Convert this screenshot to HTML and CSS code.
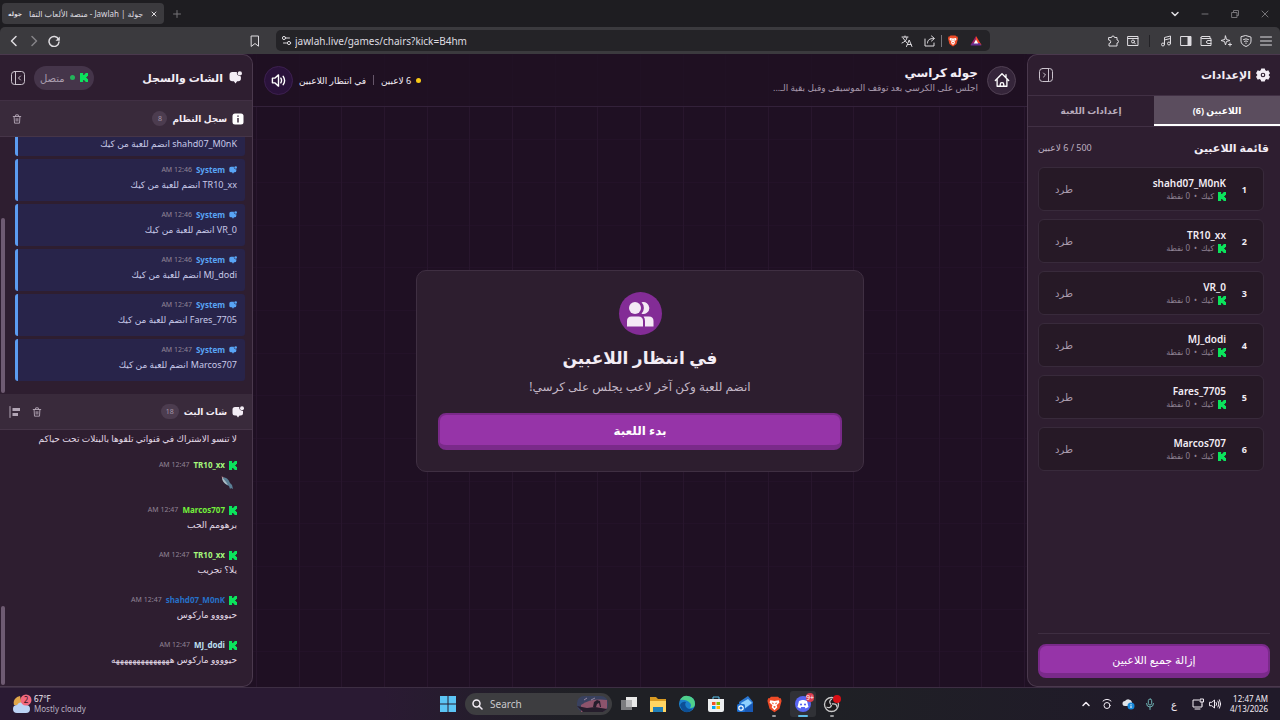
FILE: index.html
```html
<!DOCTYPE html>
<html lang="ar">
<head>
    <meta charset="UTF-8">
    <meta name="viewport" content="width=device-width, initial-scale=1.0">
    <title>جولة | Jawlah - منصة الألعاب التفاعلية</title>
    <link rel="stylesheet" href="styles.css">
</head>
<body>

    <!-- Shared icons -->
    <svg class="sprite" width="0" height="0">
        <symbol id="kick" viewBox="0 0 9 9" preserveAspectRatio="none"><path fill="#0be35c" d="M0 0h3.500v2H5V1h1V0h3v3H8v1H7v1h1v1h1v3H6V8H5V7H3.500v2H0z"/></symbol>
        <symbol id="chat" viewBox="0 0 24 24"><path fill="currentColor" d="M6 2h8.500q-1 7 7.500 8v4q0 5-5 5h-2l-3 4-3-4H6q-5 0-5-5V7q0-5 5-5z"/><circle fill="currentColor" cx="20" cy="4.500" r="4"/></symbol>
        <symbol id="trash" viewBox="0 0 24 24"><path fill="none" stroke="currentColor" stroke-width="2.200" stroke-linecap="round" stroke-linejoin="round" d="M3 6h18M8 6l1-4h6l1 4M5 6l1 16h12l1-16M10 11v6M14 11v6"/></symbol>
        <symbol id="brave" viewBox="0 0 24 24"><path fill="#ee4b27" d="M7 1h10l2 2 2 0 1 4-3 11-7 5-7-5L2 7l1-4h2z"/><path fill="#fff" d="M6 6l6 1 6-1 1 3-4 4 1 3-4 4-4-4 1-3-4-4z"/><path fill="#ee4b27" d="M8 9l3 1-1 2zM16 9l-3 1 1 2zM10 15l2-1 2 1-2 2z"/></symbol>
    </svg>

    <!-- Browser window -->
    <header class="browser" dir="ltr">
        <div class="tab-strip">
            <div class="tab">
                <span class="tab-logo" dir="rtl">جوله</span>
                <span class="tab-title" dir="rtl">جولة | Jawlah - منصة الألعاب التفا</span>
                <button class="icon-button" aria-label="Close tab"><svg width="8" height="8" viewBox="0 0 8 8"><path class="line" d="M2 2l4 4M6 2L2 6"/></svg></button>
            </div>
            <button class="icon-button dim new-tab" aria-label="New tab"><svg width="10" height="10" viewBox="0 0 10 10"><path class="line" d="M5 1.500v7M1.500 5h7"/></svg></button>
            <div class="window-buttons">
                <button class="icon-button" aria-label="Search tabs"><svg width="10" height="10" viewBox="0 0 10 10"><path class="line bold" d="M2 3.500l3 3 3-3"/></svg></button>
                <button class="icon-button dim" aria-label="Minimize"><svg width="10" height="10" viewBox="0 0 10 10"><path class="line" d="M2 5h6"/></svg></button>
                <button class="icon-button dim" aria-label="Restore"><svg width="10" height="10" viewBox="0 0 10 10"><path class="line" d="M2 3.500h5v5H2zM3.500 3.500v-2h5v5H7"/></svg></button>
                <button class="icon-button dim" aria-label="Close"><svg width="10" height="10" viewBox="0 0 10 10"><path class="line" d="M2 2l6 6M8 2L2 8"/></svg></button>
            </div>
        </div>
        <div class="toolbar">
            <div class="nav-buttons">
                <button class="icon-button" aria-label="Back"><svg width="12" height="12" viewBox="0 0 12 12"><path class="line bold" d="M8 1.500L3.500 6 8 10.500"/></svg></button>
                <button class="icon-button dim" aria-label="Forward"><svg width="12" height="12" viewBox="0 0 12 12"><path class="line bold" d="M4 1.500L8.500 6 4 10.500"/></svg></button>
                <button class="icon-button" aria-label="Reload"><svg width="12" height="12" viewBox="0 0 12 12"><path class="line bold" d="M10.500 4.200A5 5 0 1 0 11 7"/><path fill="currentColor" d="M11.800 1.500v4.300H7.500z"/></svg></button>
            </div>
            <button class="icon-button bookmark" aria-label="Bookmark"><svg width="12" height="12" viewBox="0 0 12 12"><path class="line" d="M2.500 1h7v10.200L6 8.500l-3.500 2.700z"/></svg></button>
            <div class="address">
                <svg width="11" height="11" viewBox="0 0 11 11"><path class="line" d="M5 3h3.500M2.500 8h3"/><circle class="line" cx="3" cy="3" r="1.600"/><circle class="line" cx="8" cy="8" r="1.600"/></svg>
                <input type="text" aria-label="Address" value="jawlah.live/games/chairs?kick=B4hm">
                <button class="icon-button" aria-label="Translate"><svg width="12" height="12" viewBox="0 0 12 12"><path class="line" d="M1 2h6M4 1v1M2 3l4 5M6 2.500C6 5 3.500 7 1 8M5.500 11.500l2.700-6.500 2.700 6.500M6.500 9.500H10"/></svg></button>
                <button class="icon-button" aria-label="Share"><svg width="12" height="12" viewBox="0 0 12 12"><path class="line" d="M1 4v7h9V8M3.500 8c0-3 2-4.500 6-4.500M7.500 1l3 2.500-3 2.500"/></svg></button>
                <span class="separator"></span>
                <svg width="12" height="12"><use href="#brave"/></svg>
                <svg width="12" height="12" viewBox="0 0 12 12"><path fill="#ff4724" d="M6 1l5.500 9H9L6 5z"/><path fill="#9e1f63" d="M6 1L.5 10H3l3-5z"/><path fill="#662d91" d="M.5 10.500h11L9.500 8h-7z"/><path fill="#fff" d="M6 4.500L8.300 8.500H3.700z"/></svg>
            </div>
            <div class="extensions">
                <button class="icon-button" aria-label="Extensions"><svg width="12" height="12" viewBox="0 0 12 12"><path class="line" d="M2 2.500h2.500a1.500 1.500 0 0 1 3 0H10V5a1.500 1.500 0 0 1 0 3v3H2V8.500a1.500 1.500 0 0 0 0-3.500z"/></svg></button>
                <button class="icon-button" aria-label="Page search"><svg width="12" height="12" viewBox="0 0 12 12"><path class="line" d="M1 1.500h10v9H1zM1 3.500h10"/><circle class="line" cx="6" cy="6.500" r="1.500"/><path class="line" d="M7 7.500l1.500 1.500"/></svg></button>
                <span class="separator"></span>
                <button class="icon-button" aria-label="Music"><svg width="12" height="12" viewBox="0 0 12 12"><path class="line" d="M4.500 9.500V2.500L10.500 1v7.500M4.500 5l6-1.500"/><circle class="line" cx="3" cy="9.500" r="1.500"/><circle class="line" cx="9" cy="8.500" r="1.500"/></svg></button>
                <button class="icon-button" aria-label="Sidebar"><svg width="12" height="12" viewBox="0 0 12 12"><path class="line" d="M1 1.500h10v9H1z"/><path fill="currentColor" d="M7.500 1.500H11v9H7.500z"/></svg></button>
                <button class="icon-button" aria-label="Wallet"><svg width="12" height="12" viewBox="0 0 12 12"><path class="line" d="M10 3.500V1.500H2a1 1 0 0 0 0 2h9v7H1V2.500M11 5.500H8a1.500 1.500 0 0 0 0 3h3"/></svg></button>
                <button class="icon-button" aria-label="Leo"><svg width="12" height="12" viewBox="0 0 12 12"><path class="line" d="M5.500 1l1 3.500L10 5.500l-3.500 1-1 3.500-1-3.500L1 5.500l3.500-1zM10 8v3M8.500 9.500h3"/></svg></button>
                <button class="icon-button" aria-label="VPN"><svg width="12" height="12" viewBox="0 0 12 12"><path class="line" d="M6 .6l5 1.500v4c0 2.500-2 4.200-5 5.400C3 10.300 1 8.600 1 6.100v-4zM3.500 4.500q2.500-1.500 5 0M4.500 6.300q1.500-1 3 0M6 8v.5"/></svg></button>
                <button class="icon-button" aria-label="Menu"><svg width="12" height="12" viewBox="0 0 12 12"><path class="line" d="M.5 2h11M.5 6h11M.5 10h11"/></svg></button>
            </div>
        </div>
    </header>

    <div class="app" dir="rtl">

        <!-- Settings and players -->
        <aside class="panel settings">
            <div class="panel-header">
                <svg width="14" height="14" viewBox="0 0 24 24"><path fill="currentColor" fill-rule="evenodd" d="M9 1h6l1 3 2 1 3-1 3 5-2 2v2l2 2-3 5-3-1-2 1-1 3H9l-1-3-2-1-3 1-3-5 2-2v-2L0 9l3-5 3 1 2-1zM12 8a4 4 0 1 0 0 8 4 4 0 0 0 0-8zM12 10a2 2 0 1 1 0 4 2 2 0 0 1 0-4z"/></svg>
                <h2>الإعدادات</h2>
                <button class="icon-button collapse" aria-label="إخفاء الإعدادات"><svg width="16" height="16" viewBox="0 0 16 16"><rect class="line" x="1.500" y="1.500" width="13" height="13" rx="3"/><path class="line" d="M10.500 1.500v13M5.500 6l2 2-2 2"/></svg></button>
            </div>
            <div class="tabs">
                <button class="tab-button active">اللاعبين (6)</button>
                <button class="tab-button">إعدادات اللعبة</button>
            </div>
            <div class="list-title">
                <h3>قائمة اللاعبين</h3>
                <span>500 / 6 لاعبين</span>
            </div>
            <ol class="players">
                <li class="player">
                    <span class="rank">1</span>
                    <div class="player-info">
                        <span class="player-name">shahd07_M0nK</span>
                        <span class="player-meta"><svg width="8" height="9"><use href="#kick"/></svg><span>كيك</span><span>•</span><span>0 نقطة</span></span>
                    </div>
                    <button class="kick-button">طرد</button>
                </li>
                <li class="player">
                    <span class="rank">2</span>
                    <div class="player-info">
                        <span class="player-name">TR10_xx</span>
                        <span class="player-meta"><svg width="8" height="9"><use href="#kick"/></svg><span>كيك</span><span>•</span><span>0 نقطة</span></span>
                    </div>
                    <button class="kick-button">طرد</button>
                </li>
                <li class="player">
                    <span class="rank">3</span>
                    <div class="player-info">
                        <span class="player-name">VR_0</span>
                        <span class="player-meta"><svg width="8" height="9"><use href="#kick"/></svg><span>كيك</span><span>•</span><span>0 نقطة</span></span>
                    </div>
                    <button class="kick-button">طرد</button>
                </li>
                <li class="player">
                    <span class="rank">4</span>
                    <div class="player-info">
                        <span class="player-name">MJ_dodi</span>
                        <span class="player-meta"><svg width="8" height="9"><use href="#kick"/></svg><span>كيك</span><span>•</span><span>0 نقطة</span></span>
                    </div>
                    <button class="kick-button">طرد</button>
                </li>
                <li class="player">
                    <span class="rank">5</span>
                    <div class="player-info">
                        <span class="player-name">Fares_7705</span>
                        <span class="player-meta"><svg width="8" height="9"><use href="#kick"/></svg><span>كيك</span><span>•</span><span>0 نقطة</span></span>
                    </div>
                    <button class="kick-button">طرد</button>
                </li>
                <li class="player">
                    <span class="rank">6</span>
                    <div class="player-info">
                        <span class="player-name">Marcos707</span>
                        <span class="player-meta"><svg width="8" height="9"><use href="#kick"/></svg><span>كيك</span><span>•</span><span>0 نقطة</span></span>
                    </div>
                    <button class="kick-button">طرد</button>
                </li>
            </ol>
            <div class="panel-footer">
                <button class="primary-button remove-all">إزالة جميع اللاعبين</button>
            </div>
        </aside>

        <!-- Game -->
        <main class="game">
            <div class="game-header">
                <button class="round-button" aria-label="الرئيسية"><svg width="16" height="16" viewBox="0 0 18 18"><path class="line bold" d="M1.500 9.500L9 2l7.500 7.500M3.500 8v8h11V8M13.500 6V3M7 16v-2a2 2 0 0 1 4 0v2"/></svg></button>
                <div class="game-title">
                    <h1>جوله كراسي</h1>
                    <p>اجلس على الكرسي بعد توقف الموسيقى وقبل بقية الـ...</p>
                </div>
                <div class="status">
                    <span class="dot yellow"></span>
                    <span>6 لاعبين</span>
                    <span class="bar"></span>
                    <span>في انتظار اللاعبين</span>
                </div>
                <button class="round-button purple" aria-label="الصوت"><svg width="15" height="15" viewBox="0 0 16 16"><path class="line bold" d="M1.500 5.500h2.500L8 2v12l-4-3.500H1.500zM10.500 5.500q1.500 2.500 0 5M13 3.500q3 4.500 0 9"/></svg></button>
            </div>
            <div class="stage">
                <section class="start-card">
                    <div class="badge-icon"><svg width="30" height="30" viewBox="0 0 30 30"><circle cx="10" cy="9" r="6"/><path d="M16.500 3.300a6 6 0 1 1 0 11.400 8 8 0 0 0 0-11.400zM2 27.500V22q0-4.500 4.500-4.500h7Q18 17.500 18 22v5.500H2zM18.500 17.500H24q4.500 0 4.500 4.500v5.500H20V22q0-3-1.500-4.500z"/></svg></div>
                    <h2>في انتظار اللاعبين</h2>
                    <p>انضم للعبة وكن آخر لاعب يجلس على كرسي!</p>
                    <button class="primary-button">بدء اللعبة</button>
                </section>
            </div>
        </main>

        <!-- Chat and log -->
        <aside class="panel chat">
            <div class="panel-header">
                <svg width="13" height="13"><use href="#chat"/></svg>
                <h2>الشات والسجل</h2>
                <span class="connected"><svg width="8" height="9"><use href="#kick"/></svg><span class="dot"></span>متصل</span>
                <button class="icon-button collapse" aria-label="إخفاء الشات"><svg width="16" height="16" viewBox="0 0 16 16"><rect class="line" x="1.500" y="1.500" width="13" height="13" rx="3"/><path class="line" d="M5.500 1.500v13M10.500 6l-2 2 2 2"/></svg></button>
            </div>
            <div class="section-header">
                <svg width="12" height="12" viewBox="0 0 12 12"><rect fill="#fff" x=".5" y=".5" width="11" height="11" rx="2.500"/><path stroke="#3a2a3d" stroke-width="1.500" d="M6 2.500v1.300M6 5v4.500"/></svg>
                <h3>سجل النظام</h3>
                <span class="count">8</span>
                <button class="icon-button" aria-label="مسح السجل"><svg width="10" height="10"><use href="#trash"/></svg></button>
            </div>
            <div class="feed log">
                <span class="scroll-thumb log-thumb"></span>
                <div class="message system">
                    <p>shahd07_M0nK انضم للعبة من كيك</p>
                </div>
                <div class="message system">
                    <div class="message-head"><svg width="8" height="8"><use href="#chat"/></svg><b>System</b><time>12:46 AM</time></div>
                    <p>TR10_xx انضم للعبة من كيك</p>
                </div>
                <div class="message system">
                    <div class="message-head"><svg width="8" height="8"><use href="#chat"/></svg><b>System</b><time>12:46 AM</time></div>
                    <p>VR_0 انضم للعبة من كيك</p>
                </div>
                <div class="message system">
                    <div class="message-head"><svg width="8" height="8"><use href="#chat"/></svg><b>System</b><time>12:46 AM</time></div>
                    <p>MJ_dodi انضم للعبة من كيك</p>
                </div>
                <div class="message system">
                    <div class="message-head"><svg width="8" height="8"><use href="#chat"/></svg><b>System</b><time>12:47 AM</time></div>
                    <p>Fares_7705 انضم للعبة من كيك</p>
                </div>
                <div class="message system">
                    <div class="message-head"><svg width="8" height="8"><use href="#chat"/></svg><b>System</b><time>12:47 AM</time></div>
                    <p>Marcos707 انضم للعبة من كيك</p>
                </div>
            </div>
            <div class="section-header">
                <svg width="12" height="12"><use href="#chat"/></svg>
                <h3>شات البث</h3>
                <span class="count">18</span>
                <button class="icon-button" aria-label="مسح الشات"><svg width="10" height="10"><use href="#trash"/></svg></button>
                <button class="icon-button align" aria-label="محاذاة"><svg width="12" height="12" viewBox="0 0 12 12"><path class="line" d="M1 .5v11"/><path fill="currentColor" d="M3.500 2H11v3H3.500zM3.500 7H9v3H3.500z"/></svg></button>
            </div>
            <div class="feed stream">
                <span class="scroll-thumb stream-thumb"></span>
                <div class="message">
                    <p>لا تنسو الاشتراك في قنواتي تلقوها بالبنلات تحت حياكم</p>
                </div>
                <div class="message">
                    <div class="message-head"><svg width="8" height="9"><use href="#kick"/></svg><b class="lime">TR10_xx</b><time>12:47 AM</time></div>
                    <svg class="fish" width="16" height="16" viewBox="0 0 16 16"><path fill="#5b7f95" d="M3 2q6 0 8 6l2 2 1 4-2-1-1 1-1-3Q4 9 3 2z"/><path fill="#aebdc4" d="M3 2q0 6 6 8L7 7z"/><path fill="#c98f97" d="M2.500 1.500l2 .5-1 1.500z"/></svg>
                </div>
                <div class="message">
                    <div class="message-head"><svg width="8" height="9"><use href="#kick"/></svg><b class="green">Marcos707</b><time>12:47 AM</time></div>
                    <p>برهومم الحب</p>
                </div>
                <div class="message">
                    <div class="message-head"><svg width="8" height="9"><use href="#kick"/></svg><b class="lime">TR10_xx</b><time>12:47 AM</time></div>
                    <p>يلا؟ تجريب</p>
                </div>
                <div class="message">
                    <div class="message-head"><svg width="8" height="9"><use href="#kick"/></svg><b class="blue">shahd07_M0nK</b><time>12:47 AM</time></div>
                    <p>حيوووو ماركوس</p>
                </div>
                <div class="message">
                    <div class="message-head"><svg width="8" height="9"><use href="#kick"/></svg><b class="ice">MJ_dodi</b><time>12:47 AM</time></div>
                    <p>حيوووو ماركوس ههههههههههههههه</p>
                </div>
            </div>
        </aside>
    </div>

    <!-- Taskbar -->
    <footer class="taskbar" dir="ltr">
        <div class="weather">
            <svg width="20" height="20" viewBox="0 0 20 20"><path fill="#e0a64a" d="M8 2a7 7 0 0 0-6 9h8z"/><path fill="#bcd3f5" d="M5 19a4 4 0 0 1 0-8 5 5 0 0 1 9 0 4 4 0 0 1 0 8z"/><circle fill="#f0687e" cx="14" cy="6" r="5.500"/><text class="weather-badge" x="14" y="9" text-anchor="middle">2</text></svg>
            <div>
                <div>67°F</div>
                <div class="weather-text">Mostly cloudy</div>
            </div>
        </div>
        <div class="task-icons">
            <svg width="18" height="18" viewBox="0 0 18 18"><path fill="#5cc5f5" d="M1 1h7.500v7.500H1zM9.500 1H17v7.500H9.500zM1 9.500h7.500V17H1zM9.500 9.500H17V17H9.500z"/></svg>
            <label class="search">
                <svg width="11" height="11" viewBox="0 0 11 11"><circle class="line bold" cx="4.500" cy="4.500" r="3.500"/><path class="line bold" d="M7 7l3 3"/></svg>
                <input type="text" placeholder="Search" aria-label="Search">
                <svg width="31" height="16" viewBox="0 0 31 16"><rect width="31" height="16" rx="7" fill="#39415f"/><path fill="#8d546c" d="M4 9q10-7 26-5v8l-4 4H4z"/><path fill="#251d2c" d="M0 10l10 2 8-1 12 2-4 3H6zM16 11l1-5 3-2 3 1 1 6h-1l-1-4-2 1-1 3z"/><path stroke="#d6b7cf" stroke-width=".6" d="M7 4l3-2M14 4l4-2"/></svg>
            </label>
            <svg width="18" height="18" viewBox="0 0 18 18"><path fill="#7c7c7f" d="M1 5h11v10H1z"/><path fill="#e9e9e9" d="M6 2h11v10H6z"/><path fill="#b5b5b7" d="M6 5h6v7H6z"/></svg>
            <svg width="18" height="18" viewBox="0 0 18 18"><path fill="#d99a22" d="M1 2h6l2 2h8v5H1z"/><path fill="#ffd563" d="M1 6h16v11H1z"/><path fill="#217fb8" d="M4 12h10v5H4z"/></svg>
            <svg width="18" height="18" viewBox="0 0 18 18"><circle cx="9" cy="9" r="8" fill="#1a7fcb"/><path fill="#4fd08b" d="M2 5a8 8 0 0 1 15 4q0 4-5 4 2-3 0-5-4-4-10-3z"/><path fill="#0d4f96" d="M2 10q2-4 6-3-2 3 1 6 3 2 6 0-3 5-8 4-4-2-5-7z"/></svg>
            <svg width="18" height="18" viewBox="0 0 18 18"><path fill="none" stroke="#5ac2ee" d="M6 5V2h6v3"/><path fill="#eceef0" d="M1 4h16v11q0 2-2 2H3q-2 0-2-2z"/><path fill="#f25022" d="M5 7h3.500v3H5z"/><path fill="#7fba00" d="M9.500 7H13v3H9.500z"/><path fill="#00a4ef" d="M5 11h3.500v3H5z"/><path fill="#ffb900" d="M9.500 11H13v3H9.500z"/></svg>
            <svg width="18" height="18" viewBox="0 0 18 18"><path fill="#2a76d2" d="M3 7l9-6 5 6v10H4z"/><path fill="#8fd0ff" d="M5 8l7-4 4 4-8 6z"/><path fill="#1858b5" d="M17 8v9H5z"/><rect x="1" y="9" width="8" height="8" rx="1.500" fill="#1e6fd0"/><circle cx="5" cy="13" r="2.200" fill="none" stroke="#fff" stroke-width="1.200"/></svg>
            <span class="running"><svg width="17" height="17"><use href="#brave"/></svg></span>
            <span class="running current"><svg width="18" height="18" viewBox="0 0 18 18"><circle cx="9" cy="9" r="8" fill="#5865f2"/><path fill="#fff" d="M5 6l3-1h2l3 1 1.500 6-3 1.500L10.800 12H7.200l-.7 1.500-3-1.500z"/><circle cx="7" cy="9.500" r="1.100" fill="#5865f2"/><circle cx="11" cy="9.500" r="1.100" fill="#5865f2"/></svg><span class="notify">9+</span></span>
            <span class="running"><svg width="18" height="18" viewBox="0 0 18 18"><circle cx="8.500" cy="9.500" r="7" fill="#1c1a1d" stroke="#c9c9c9" stroke-width="1.300"/><path fill="none" stroke="#c9c9c9" stroke-width="1.300" d="M9 4q-4 2-1 5.500M9 9q5-1 5 3.500M8.500 10q-1 4-5 2"/><circle cx="14" cy="4" r="4" fill="#d80f16"/></svg></span>
        </div>
        <div class="tray">
            <svg width="12" height="12" viewBox="0 0 12 12"><path class="line bold" d="M3 7.500l3-3 3 3"/></svg>
            <svg width="12" height="12" viewBox="0 0 12 12"><circle class="line" cx="6" cy="7.500" r="3"/><path class="line" d="M2 3q4-3.500 8 0"/></svg>
            <svg width="13" height="12" viewBox="0 0 13 12"><path fill="#dfe3e8" d="M3 8a2.500 2.500 0 0 1 0-5 4 4 0 0 1 7 1v4z"/><circle cx="9" cy="8" r="3.500" fill="#1687d9"/><path stroke="#fff" d="M9 6v.8M9 7.500V10"/></svg>
            <svg class="mic" width="12" height="12" viewBox="0 0 12 12"><rect class="line" x="4.300" y="1" width="3.400" height="6" rx="1.700"/><path class="line" d="M2.500 5.500a3.500 3.500 0 0 0 7 0M6 9v2.500"/></svg>
            <span class="language" lang="ar">ع</span>
            <div class="tray-group">
                <svg width="12" height="12" viewBox="0 0 12 12"><path class="line" d="M7 2H1v7h9V7M3 11h5M8.500 1h3v3h-3zM10 4v3"/></svg>
                <svg width="12" height="12" viewBox="0 0 12 12"><path class="line" d="M.8 4.300h2L5.500 2v8L2.800 7.700h-2zM7.200 4.500q1 1.500 0 3M9 3q2 3 0 6M10.500 1.800q2.500 4.200 0 8.400"/></svg>
            </div>
            <div class="clock">
                <div>12:47 AM</div>
                <div>4/13/2026</div>
            </div>
        </div>
    </footer>

</body>
</html>
```

FILE: styles.css
```css
* {
    box-sizing: border-box;
}

body {
    margin: 0;
    min-height: 100vh;
    display: flex;
    flex-direction: column;
    background: #1d0f20;
    color: #f3edf5;
    font-family: "Noto Sans", "DejaVu Sans", sans-serif;
    font-size: 10px;
}

h1, h2, h3, p, ol {
    margin: 0;
    padding: 0;
}

button, input {
    font: inherit;
    color: inherit;
}

svg {
    display: block;
    flex: none;
}

.sprite {
    position: absolute;
}

.line {
    fill: none;
    stroke: currentColor;
    stroke-width: 1;
    stroke-linecap: round;
    stroke-linejoin: round;
}

.line.bold {
    stroke-width: 1.5;
}

.icon-button {
    display: flex;
    padding: 0;
    border: none;
    background: none;
    cursor: pointer;
}

.dim {
    opacity: 0.45;
}

/* Browser window */
.browser {
    background: #1e1d21;
    color: #dedce0;
}

.tab-strip {
    display: flex;
    align-items: center;
    height: 27px;
    padding: 0 10px 0 2px;
}

.tab {
    display: flex;
    align-items: center;
    gap: 7px;
    height: 21px;
    padding: 0 6px;
    border-radius: 4px;
    background: #3b3a3e;
}

.tab-logo {
    font-size: 6px;
    font-weight: bold;
}

.tab-title {
    white-space: nowrap;
    font-size: 8px;
    line-height: 16px;
}

.new-tab {
    margin-left: 8px;
}

.window-buttons {
    display: flex;
    gap: 20px;
    margin-left: auto;
}

.toolbar {
    display: flex;
    align-items: center;
    height: 27px;
    padding: 0 8px;
    border-radius: 5px 5px 0 0;
    background: #3b3a3e;
}

.nav-buttons {
    display: flex;
    gap: 8px;
    flex: 0 1 241px;
}

.bookmark {
    margin-right: 15px;
}

.address {
    flex: 0 1 714px;
    display: flex;
    align-items: center;
    gap: 11px;
    height: 21px;
    padding: 0 8px 0 5px;
    border-radius: 5px;
    background: #242327;
}

.address input {
    flex: 1;
    min-width: 0;
    margin-left: -8px;
    padding: 0;
    border: none;
    outline: none;
    background: none;
    font-size: 10px;
}

.address .separator {
    margin: 0 -6px;
    background: #77757a;
}

.extensions {
    display: flex;
    align-items: center;
    gap: 8px;
    margin-left: auto;
}

.separator {
    width: 1px;
    height: 12px;
    margin: 0 2px;
    background: #232226;
}

/* Page */
.app {
    flex: 1;
    display: flex;
    background-color: #1f1023;
    background-image:
        linear-gradient(90deg, #28162d 1px, transparent 1px, transparent 43px, #28162d 43px, #28162d 44px, transparent 44px, transparent 85px, #28162d 85px, #28162d 86px, transparent 86px),
        linear-gradient(#231228 1px, transparent 1px, transparent 43px, #231228 43px, #231228 44px, transparent 44px, transparent 85px, #231228 85px, #231228 86px, transparent 86px);
    background-size: 128px 128px;
}

.panel {
    flex: 0 0 253px;
    display: flex;
    flex-direction: column;
    border: 1px solid #4a394d;
    background: #2e1e30;
}

.settings {
    border-right: none;
    border-radius: 10px 0 0 10px;
}

.chat {
    border-left: none;
    border-radius: 0 10px 10px 0;
    overflow: hidden;
}

.panel-header {
    display: flex;
    align-items: center;
    gap: 5px;
    height: 41px;
    padding: 0 10px;
    border-bottom: 1px solid #413044;
}

.panel-header h2 {
    flex: 1;
    font-size: 11px;
    line-height: 18px;
}

.collapse {
    opacity: 0.8;
}

/* Tabs */
.tabs {
    display: flex;
    height: 31px;
    border-bottom: 1px solid #413044;
}

.tab-button {
    flex: 1;
    border: none;
    border-bottom: 2px solid transparent;
    background: none;
    color: #b9acbc;
    font-size: 9px;
    font-weight: bold;
    cursor: pointer;
}

.tab-button.active {
    border-bottom-color: #fff;
    background: #5b4d5e;
    color: #fff;
}

/* Players */
.list-title {
    display: flex;
    align-items: center;
    justify-content: space-between;
    height: 40px;
    padding: 0 11px 0 10px;
    color: #bdb0c0;
    font-size: 9px;
}

.list-title h3 {
    color: #f3edf5;
    font-size: 11px;
}

.players {
    flex: 1;
    display: flex;
    flex-direction: column;
    gap: 8px;
    padding: 0 16px 0 10px;
    list-style: none;
}

.player {
    display: flex;
    align-items: center;
    height: 44px;
    padding: 0 16px 0 12px;
    border: 1px solid #382a3b;
    border-radius: 6px;
    background: #261926;
}

.rank {
    width: 21px;
    font-weight: bold;
    font-size: 9px;
}

.player-info {
    flex: 1;
    display: flex;
    flex-direction: column;
}

.player-name {
    font-size: 10px;
    line-height: 14px;
    font-weight: 600;
}

.player-meta {
    display: flex;
    align-items: center;
    gap: 4px;
    color: #8f8193;
    font-size: 8px;
    line-height: 12px;
}

.kick-button {
    padding: 0 4px;
    border: none;
    background: none;
    color: #a99bad;
    font-size: 10px;
    cursor: pointer;
}

.panel-footer {
    margin: 0 10px;
    padding: 10px 0 8px;
    border-top: 1px solid #3e2e41;
}

.primary-button {
    width: 100%;
    height: 37px;
    border: 2px solid #7a2a8a;
    border-bottom-width: 5px;
    border-radius: 8px;
    background: #9634a8;
    color: #fff;
    font-weight: bold;
    font-size: 12px;
    cursor: pointer;
}

.remove-all {
    height: 34px;
    font-weight: normal;
    font-size: 11px;
}

/* Game */
.game {
    flex: 1;
    min-width: 0;
    display: flex;
    flex-direction: column;
}

.game-header {
    display: flex;
    align-items: center;
    height: 53px;
    padding: 0 11px;
    border-bottom: 1px solid #33213a;
    background: #1f1023dd;
}

.round-button {
    display: flex;
    align-items: center;
    justify-content: center;
    width: 29px;
    height: 29px;
    padding: 0;
    border: 1px solid #504053;
    border-radius: 50%;
    background: #35253a;
    color: #fff;
    cursor: pointer;
}

.round-button.purple {
    border-color: #3d2050;
    background: #2a123b;
}

.game-title {
    margin-right: 9px;
}

.game-title h1 {
    font-size: 12px;
    line-height: 16px;
}

.game-title p {
    white-space: nowrap;
    color: #a597aa;
    font-size: 9px;
    line-height: 14px;
}

.status {
    display: flex;
    align-items: center;
    gap: 5px;
    margin-right: auto;
    margin-left: 6px;
    font-size: 9px;
}

.bar {
    width: 1px;
    height: 10px;
    margin: 0 2px;
    background: #66566a;
}

.dot {
    width: 5px;
    height: 5px;
    border-radius: 50%;
    background: #24b35a;
}

.dot.yellow {
    background: #f9c916;
}

.stage {
    flex: 1;
    display: flex;
    align-items: center;
    justify-content: center;
    padding-bottom: 52px;
}

.start-card {
    display: flex;
    flex-direction: column;
    align-items: center;
    width: 58%;
    padding: 21px;
    border: 1px solid #3f2f42;
    border-radius: 10px;
    background: #2d1e2f;
}

.badge-icon {
    display: flex;
    align-items: center;
    justify-content: center;
    width: 43px;
    height: 43px;
    border-radius: 50%;
    background: #832c96;
    fill: #f4e9f5;
}

.start-card h2 {
    margin-top: 9px;
    font-size: 17px;
    line-height: 28px;
}

.start-card p {
    margin: 6px 0 17px;
    color: #c3b7c6;
    font-size: 12px;
    line-height: 18px;
}

/* Chat */
.chat .panel-header {
    height: 46px;
    gap: 6px;
}

.connected {
    display: flex;
    align-items: center;
    gap: 5px;
    height: 24px;
    padding: 0 6px;
    margin-left: 2px;
    border-radius: 12px;
    background: #45354a;
    color: #aa9dae;
    font-size: 10px;
}

.section-header {
    display: flex;
    align-items: center;
    gap: 5px;
    height: 36px;
    padding: 0 8px 0 12px;
    border-bottom: 1px solid #463548;
    background: #392a3b;
}

.section-header h3 {
    font-size: 9px;
}

.section-header .icon-button {
    color: #b3a6b6;
}

.section-header .count + .icon-button {
    margin-right: auto;
}

.section-header .align {
    margin: 0 6px 0 -3px;
}

.count {
    min-width: 15px;
    padding: 0 5px;
    border-radius: 8px;
    background: #4c3c4f;
    color: #a597a9;
    font-size: 7px;
    line-height: 15px;
    text-align: center;
}

.feed {
    position: relative;
    display: flex;
    flex-direction: column;
    justify-content: flex-end;
    gap: 3px;
    padding: 0 7px 10px 15px;
    overflow: hidden;
}

.log {
    flex: 0 1 257px;
    padding-bottom: 13px;
}

.stream {
    flex: 1 1 0;
}

.scroll-thumb {
    position: absolute;
    left: 1px;
    bottom: 1px;
    width: 4px;
    border-radius: 2px;
    background: #6e5b72;
}

.log-thumb {
    height: 68%;
}

.stream-thumb {
    height: 31%;
}

.message {
    flex: none;
    height: 42px;
    padding: 4px 8px;
}

/* Oldest message, its head is scrolled out */
.message p:first-child {
    margin-top: 18px;
}

.message p {
    color: #e2d9e6;
    font-size: 9px;
    line-height: 16px;
}

.fish {
    margin: 3px 2px;
}

.system {
    border-left: 3px solid #5b9cf0;
    border-radius: 3px;
    background: #28244a;
}

.system p {
    color: #c7c9e8;
}

.message-head {
    display: flex;
    align-items: center;
    gap: 4px;
    line-height: 14px;
    color: #58a4f5;
    font-size: 8px;
}

.message-head time {
    color: #918496;
    font-size: 7px;
}

.message-head .lime {
    color: #a5f97c;
}

.message-head .green {
    color: #74f03c;
}

.message-head .blue {
    color: #2671c9;
}

.message-head .ice {
    color: #bfe0f2;
}

/* Taskbar */
.taskbar {
    display: grid;
    grid-template-columns: 1fr auto 1fr;
    align-items: center;
    height: 33px;
    padding: 0 12px;
    border-top: 1px solid #3d2e43;
    background: linear-gradient(90deg, #2a1a33, #2a1a33 30%, #1f2025 45%, #1f2025 65%, #201a29 90%);
    font-size: 8px;
    line-height: 10px;
}

.weather {
    display: flex;
    align-items: center;
    gap: 2px;
}

.weather-text {
    color: #b9b0c0;
}

.weather-badge {
    fill: #3a1420;
    font-size: 8px;
}

.task-icons {
    display: flex;
    align-items: center;
    gap: 11px;
}

.search {
    display: flex;
    align-items: center;
    gap: 7px;
    width: 147px;
    height: 22px;
    margin: 0 -3px;
    padding: 0 4px 0 7px;
    border-radius: 11px;
    background: #3d3d40;
}

.search input {
    flex: 1;
    min-width: 0;
    padding: 0;
    border: none;
    outline: none;
    background: none;
    font-size: 10px;
}

.search input::placeholder {
    color: #c9c9cc;
}

.running {
    position: relative;
    display: flex;
    align-items: center;
    justify-content: center;
    width: 18px;
    height: 26px;
}

.running::after {
    content: "";
    position: absolute;
    bottom: 0;
    width: 4px;
    height: 2px;
    border-radius: 1px;
    background: #9a9a9d;
}

.current {
    width: 26px;
    margin: 0 -4px;
    border-radius: 3px;
    background: #303136;
}

.current::after {
    width: 10px;
    background: #60bde8;
}

.notify {
    position: absolute;
    top: 2px;
    right: 2px;
    border-radius: 5px;
    background: #d93d4f;
    color: #fff;
    font-size: 7px;
    line-height: 9px;
}

.tray {
    display: flex;
    align-items: center;
    justify-content: flex-end;
    gap: 9px;
}

.mic {
    color: #6fb3b4;
}

.language {
    font-size: 10px;
    padding: 0 6px;
}

.tray-group {
    display: flex;
    gap: 5px;
}

.clock {
    text-align: right;
}
```
